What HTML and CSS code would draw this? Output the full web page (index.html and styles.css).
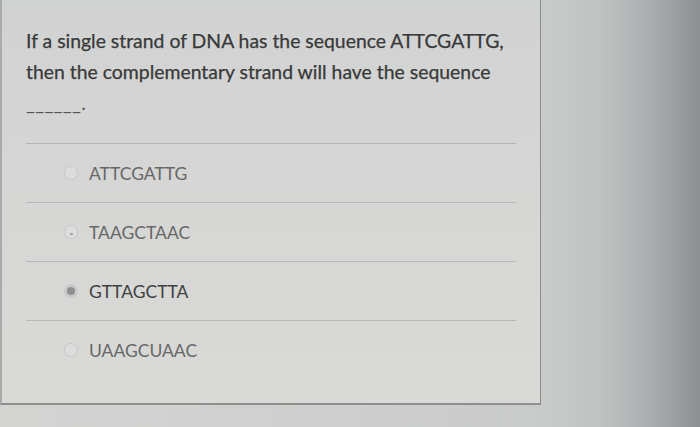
FILE: index.html
```html
<!DOCTYPE html>
<html>
<head>
<meta charset="utf-8">
<link rel="stylesheet" href="styles.css">
</head>
<body>
<div class="page">
  <div class="card">
    <div class="question">
      <p>If a single strand of DNA has the sequence ATTCGATTG, then the complementary strand will have the sequence</p>
      <p class="blank">______.</p>
    </div>
    <ul class="options">
      <li class="option"><span class="radio"></span><span class="label">ATTCGATTG</span></li>
      <li class="option"><span class="radio focus"></span><span class="label">TAAGCTAAC</span></li>
      <li class="option selected"><span class="radio checked"></span><span class="label">GTTAGCTTA</span></li>
      <li class="option"><span class="radio"></span><span class="label">UAAGCUAAC</span></li>
    </ul>
  </div>
</div>
</body>
</html>
```
FILE: styles.css
```css
html, body {
  margin: 0;
  padding: 0;
  width: 700px;
  height: 427px;
  overflow: hidden;
}
body {
  background: linear-gradient(to right, #d4d5d3 0, #c9cbca 545px, #c0c2c2 600px, #abaeaf 650px, #8d9093 700px);
  font-family: Lato, "Open Sans", sans-serif;
}
.page {
  display: flex;
  flex-direction: column;
  height: 427px;
}
.card {
  box-sizing: border-box;
  width: 541px;
  height: 405px;
  border-left: 2px solid #a9aaaa;
  border-right: 1px solid #8c8e8e;
  border-bottom: 2px solid #8e8f8f;
  padding: 0 24px 0 24px;
  background: linear-gradient(to bottom, #d1d2d2 0, #d6d6d5 200px, #d9d9d6 405px);
  display: flex;
  flex-direction: column;
}
.question {
  padding-top: 25px;
  color: #383939;
  font-size: 19.4px;
  line-height: 31px;
  -webkit-text-stroke: 0.25px #383939;
}
.question p {
  margin: 0;
  width: 490px;
}
.blank {
  color: #555;
  letter-spacing: 0.3px;
  -webkit-text-stroke: 0;
}
.options {
  list-style: none;
  margin: 0;
  padding: 0;
  margin-top: 25px;
  border-top: 1px solid #b3b4b3;
}
.option {
  display: flex;
  align-items: center;
  height: 58px;
  border-bottom: 1px solid #b6b7b6;
  padding-left: 38px;
  gap: 11px;
}
.option:last-child {
  border-bottom: none;
}
.radio {
  box-sizing: border-box;
  width: 14px;
  height: 14px;
  border-radius: 50%;
  border: 1px solid #c6c7c6;
  background: #dcdddc;
  display: flex;
  align-items: center;
  justify-content: center;
  flex: none;
}
.radio.focus::after {
  content: "";
  width: 3px;
  height: 2px;
  border-radius: 1px;
  background: #9b9c9b;
  margin-top: 3px;
}
.radio.checked {
  border: 2px solid #c8c9c8;
  background: #c8c9c8;
}
.radio.checked::after {
  content: "";
  width: 8px;
  height: 8px;
  border-radius: 50%;
  background: #8f9090;
}
.label {
  font-size: 17.5px;
  color: #666867;
}
.selected .label {
  color: #3f4040;
}
```
